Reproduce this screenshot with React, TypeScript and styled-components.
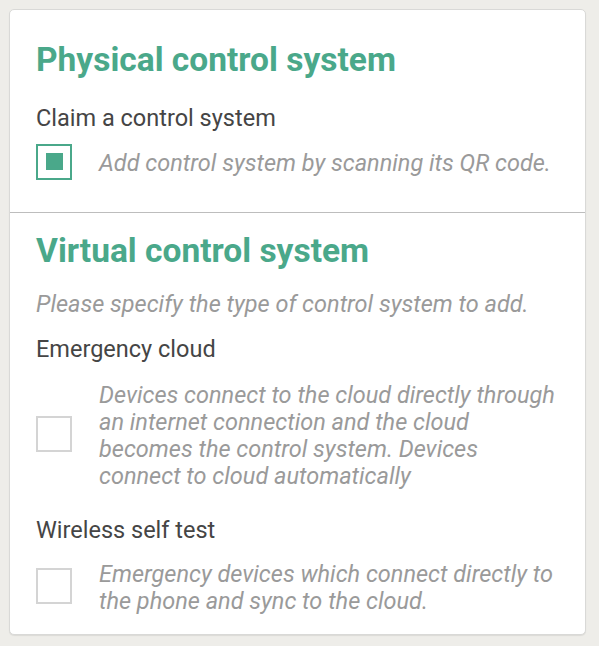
import React from 'react';
import styled, { createGlobalStyle } from 'styled-components';

const GlobalStyle = createGlobalStyle`
  html, body {
    margin: 0;
    padding: 0;
    background: #eeede9;
    font-family: Roboto, "Liberation Sans", sans-serif;
  }
`;

const Card = styled.div`
  margin: 9px 13px 10px 9px;
  background: #ffffff;
  border: 1px solid #d9d9d7;
  border-radius: 5px;
  box-shadow: 0 1px 1px rgba(0, 0, 0, 0.08);
`;

const Section = styled.section<{ $top: number; $bottom: number }>`
  padding: ${(p) => p.$top}px 27px ${(p) => p.$bottom}px 26px;
  display: flex;
  flex-direction: column;
`;

const Divider = styled.div`
  height: 1px;
  background: #bdbdbd;
`;

const Heading = styled.h2`
  margin: 0;
  font-size: 33.5px;
  line-height: 40px;
  font-weight: 700;
  color: #4aa88a;
`;

const Label = styled.div<{ $gap: number }>`
  margin-top: ${(p) => p.$gap}px;
  font-size: 23.5px;
  line-height: 26.5px;
  color: #454545;
`;

const Hint = styled.div<{ $gap: number }>`
  margin-top: ${(p) => p.$gap}px;
  font-size: 23.5px;
  line-height: 26.5px;
  font-style: italic;
  color: #9a9a9a;
`;

const OptionRow = styled.label<{ $gap: number }>`
  margin-top: ${(p) => p.$gap}px;
  display: flex;
  align-items: center;
  gap: 27px;
  cursor: pointer;
`;

// $lift raises the box a little above the centre of the text beside it
const Box = styled.span<{ $checked?: boolean; $lift: number }>`
  flex: none;
  width: 36px;
  height: 36px;
  margin-bottom: ${(p) => p.$lift}px;
  box-sizing: border-box;
  border: 2px solid ${(p) => (p.$checked ? '#4aa88a' : '#d4d4d4')};
  display: flex;
  align-items: center;
  justify-content: center;
  &::after {
    content: '';
    display: ${(p) => (p.$checked ? 'block' : 'none')};
    width: 17px;
    height: 17px;
    background: #4aa88a;
  }
`;

const Description = styled.span`
  font-size: 23.5px;
  line-height: 27px;
  font-style: italic;
  color: #9a9a9a;
`;

export default function App() {
  return (
    <>
      <GlobalStyle />
      <Card>
        <Section $top={30} $bottom={29}>
          <Heading>Physical control system</Heading>
          <Label $gap={25}>Claim a control system</Label>
          <OptionRow $gap={12}>
            <Box $checked $lift={3} />
            <Description>Add control system by scanning its QR code.</Description>
          </OptionRow>
        </Section>
        <Divider />
        <Section $top={18} $bottom={19}>
          <Heading>Virtual control system</Heading>
          <Hint $gap={20}>Please specify the type of control system to add.</Hint>
          <Label $gap={19}>Emergency cloud</Label>
          <OptionRow $gap={19}>
            <Box $lift={4} />
            <Description>
              Devices connect to the cloud directly through an internet connection and the cloud
              becomes the control system. Devices connect to cloud automatically
            </Description>
          </OptionRow>
          <Label $gap={27}>Wireless self test</Label>
          <OptionRow $gap={18}>
            <Box $lift={4} />
            <Description>
              Emergency devices which connect directly to the phone and sync to the cloud.
            </Description>
          </OptionRow>
        </Section>
      </Card>
    </>
  );
}
